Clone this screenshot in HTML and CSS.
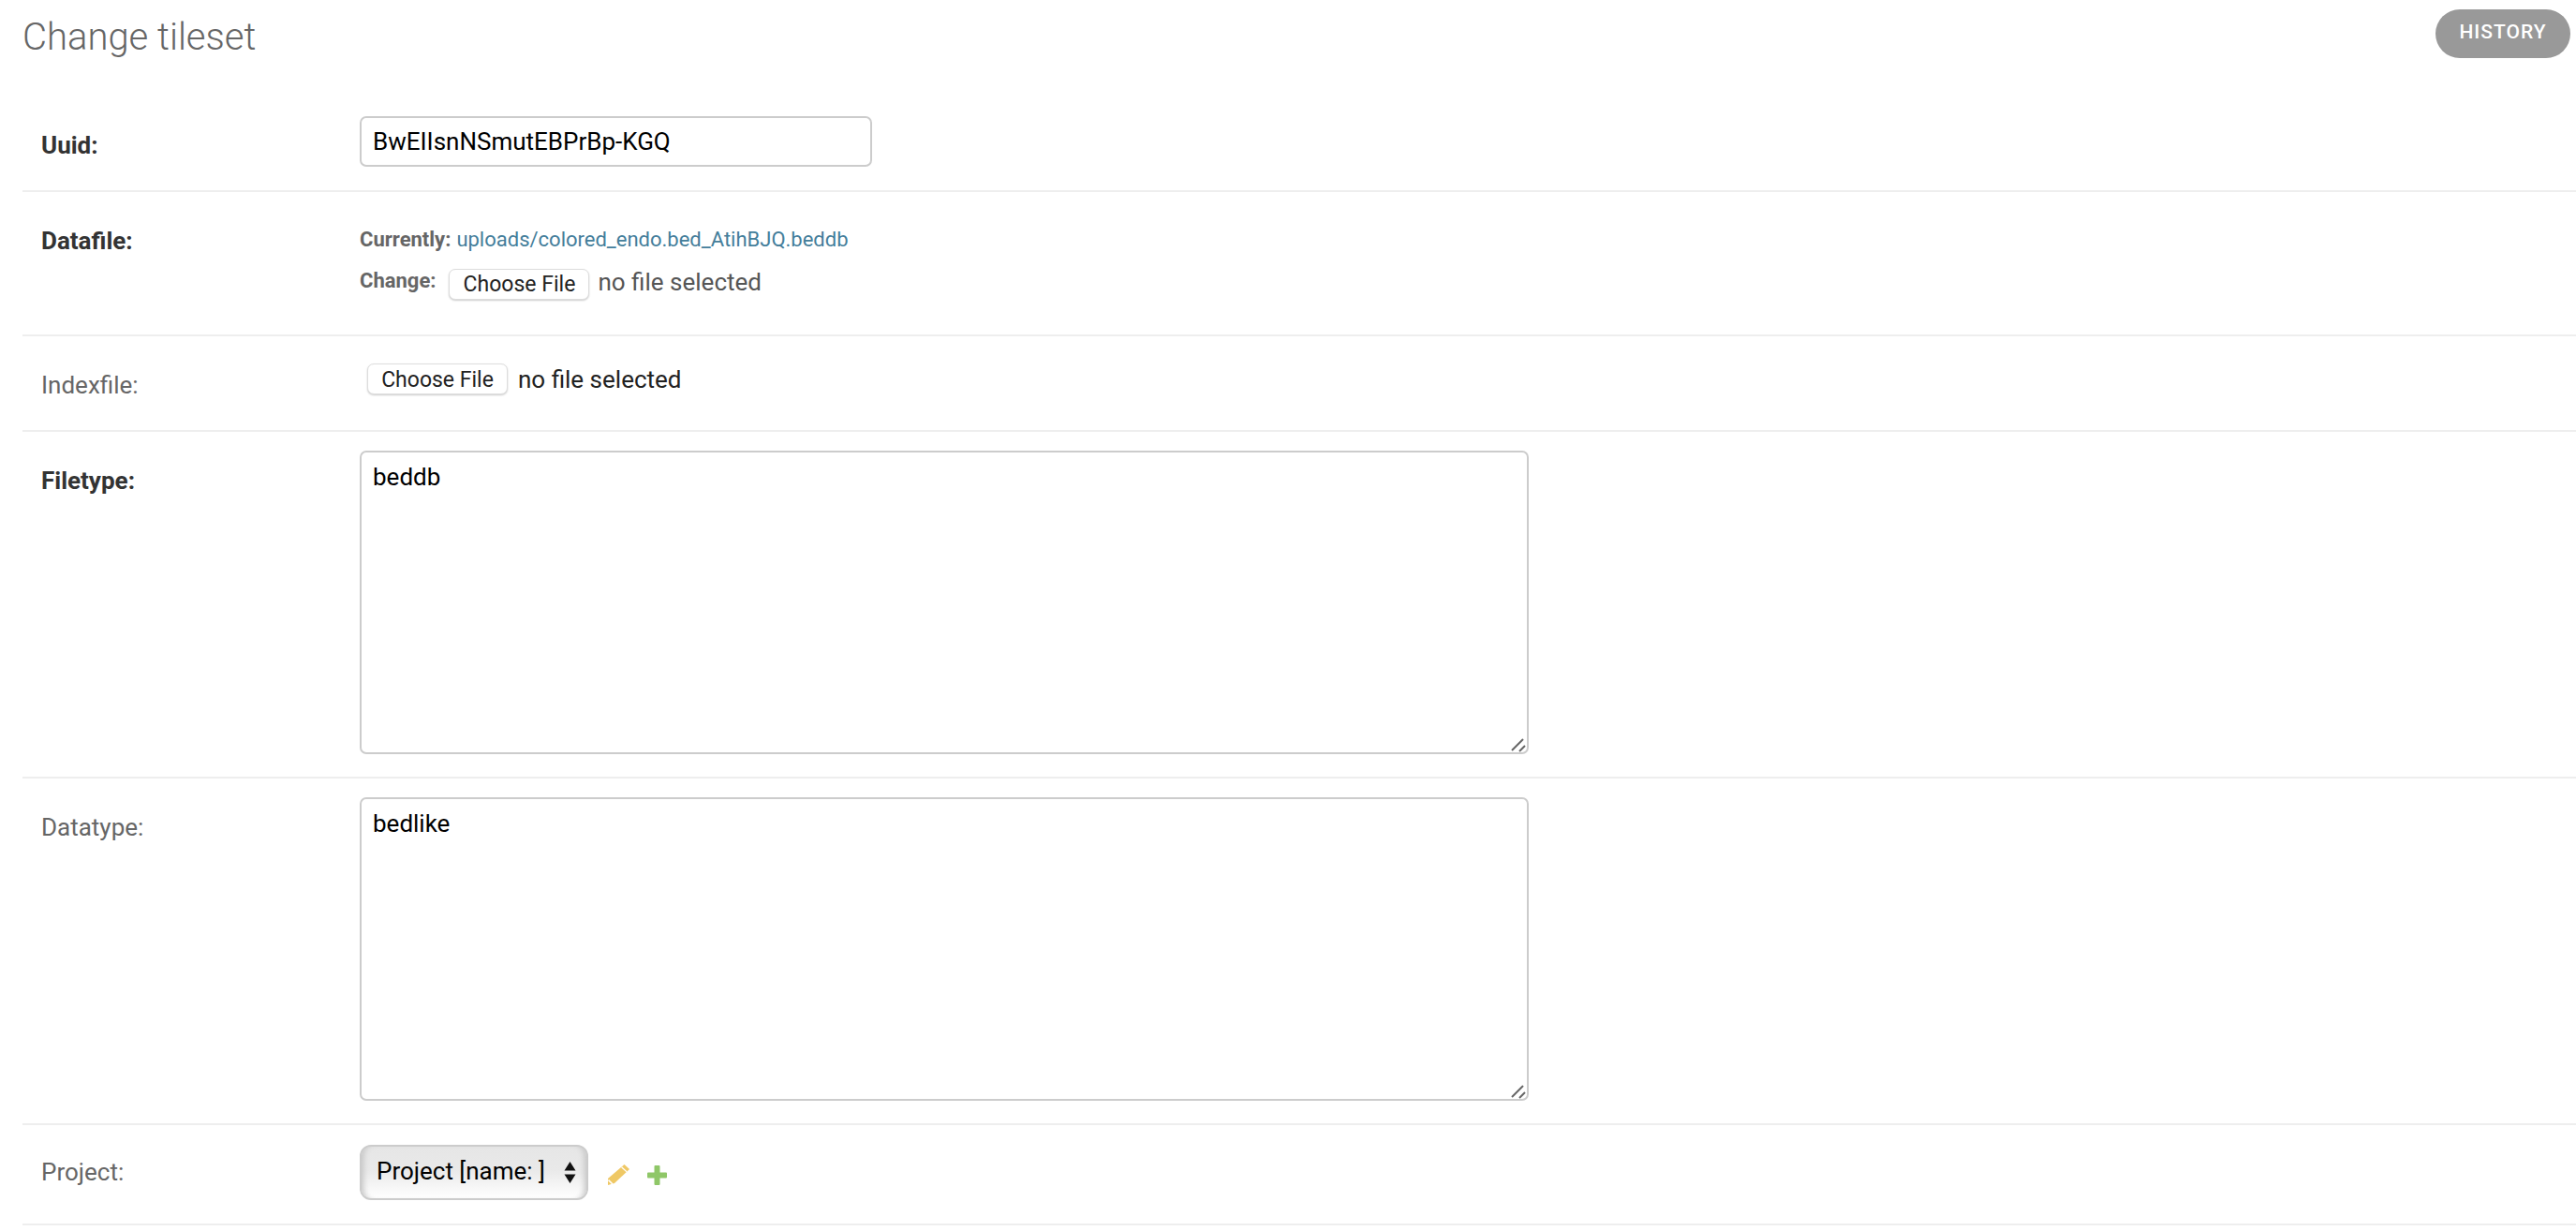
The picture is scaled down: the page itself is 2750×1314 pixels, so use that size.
FILE: index.html
```html
<!DOCTYPE html>
<html lang="en">
<head>
<meta charset="utf-8">
<title>Change tileset</title>
<link rel="stylesheet" href="styles.css">
</head>
<body>
<header class="page-head">
  <h1 class="title">Change tileset</h1>
  <a class="history" href="#">HISTORY</a>
</header>
<form class="form">
  <div class="row row-uuid">
    <label class="label required">Uuid:</label>
    <input class="text-input" type="text" value="BwEIIsnNSmutEBPrBp-KGQ">
  </div>
  <div class="row row-datafile">
    <label class="label required">Datafile:</label>
    <div class="file-stack">
      <p class="file-line"><b class="small-label">Currently:</b><a class="file-link" href="#">uploads/colored_endo.bed_AtihBJQ.beddb</a></p>
      <p class="file-line change-line"><b class="small-label">Change:</b><button type="button" class="file-btn">Choose File</button><span class="file-name muted">no file selected</span></p>
    </div>
  </div>
  <div class="row row-indexfile">
    <label class="label">Indexfile:</label>
    <div class="file-plain"><button type="button" class="file-btn">Choose File</button><span class="file-name">no file selected</span></div>
  </div>
  <div class="row row-area row-filetype">
    <label class="label required">Filetype:</label>
    <div class="area-wrap">
      <textarea class="area">beddb</textarea>
      <svg class="grip" width="16" height="16" viewBox="0 0 16 16"><path d="M1 14 L13 2 M9 15 L15 9" stroke="#666" stroke-width="2"/></svg>
    </div>
  </div>
  <div class="row row-area">
    <label class="label">Datatype:</label>
    <div class="area-wrap">
      <textarea class="area">bedlike</textarea>
      <svg class="grip" width="16" height="16" viewBox="0 0 16 16"><path d="M1 14 L13 2 M9 15 L15 9" stroke="#666" stroke-width="2"/></svg>
    </div>
  </div>
  <div class="row row-project">
    <label class="label">Project:</label>
    <div class="select-wrap">
      <select class="select"><option>Project [name: ]</option></select>
      <svg class="select-arrows" width="13" height="23" viewBox="0 0 13 23"><path d="M6.5 0 L12.5 9.5 H.5 Z M.5 13.5 H12.5 L6.5 23 Z" fill="#111"/></svg>
    </div>
    <svg class="icon icon-edit" width="23" height="22" viewBox="0 0 23 22"><path d="M17.5 0 L23 5 L7 20 L0 22 L0 15 Z" fill="#efc865"/><path d="M.5 16.5 L5 21" stroke="#fff" stroke-width="1.6"/><path d="M14.5 2.8 L20 7.8" stroke="#fff" stroke-width="1.2"/></svg>
    <svg class="icon icon-add" width="21" height="21" viewBox="0 0 21 21"><path d="M7.5 1 Q7.5 0 8.5 0 H12.5 Q13.5 0 13.5 1 V7.5 H20 Q21 7.5 21 8.5 V12.5 Q21 13.5 20 13.5 H13.5 V20 Q13.5 21 12.5 21 H8.5 Q7.5 21 7.5 20 V13.5 H1 Q0 13.5 0 12.5 V8.5 Q0 7.5 1 7.5 H7.5 Z" fill="#8fc768"/></svg>
  </div>
</form>
</body>
</html>
```
FILE: styles.css
```css
* { box-sizing: border-box; }
html, body { margin: 0; height: 100%; overflow: hidden; }
body {
  background: #fff;
  color: #333;
  font-family: Roboto, "Liberation Sans", sans-serif;
  padding: 0 0 0 24px;
}
.page-head {
  display: flex;
  justify-content: space-between;
  align-items: flex-start;
  height: 100px;
  padding-top: 10px;
  padding-right: 6px;
}
.title {
  margin: -10px 0 0;
  padding-top: 10px;
  font-size: 40px;
  font-weight: 300;
  line-height: 60px;
  color: #666;
}
.history {
  display: block;
  width: 144px;
  height: 52px;
  line-height: 48px;
  text-align: center;
  border-radius: 26px;
  background: #999;
  color: #fff;
  font-size: 21px;
  font-weight: 500;
  letter-spacing: 1px;
  text-decoration: none;
}
.row {
  display: flex;
  align-items: flex-start;
  border-bottom: 2px solid #eee;
  padding-left: 20px;
}
.label {
  width: 340px;
  flex: none;
  font-size: 26px;
  line-height: 30px;
  color: #666;
}
.label.required { font-weight: 700; color: #333; }
.row-uuid { height: 105px; padding-top: 24px; }
.row-uuid .label { padding-top: 16px; }
.text-input {
  width: 547px;
  height: 54px;
  padding: 0 12px;
  border: 2px solid #ccc;
  border-radius: 7px;
  font: 400 26px Roboto, sans-serif;
  color: #000;
  background: #fff;
  outline: none;
}
.row-datafile { height: 154px; padding-top: 32px; }
.row-datafile .label { padding-top: 5px; }
.file-stack { display: flex; flex-direction: column; padding-top: 3px; }
.file-line { margin: 0; display: flex; align-items: center; height: 30px; font-size: 22px; white-space: nowrap; }
.change-line { margin-top: 12px; height: 34px; }
.small-label { font-weight: 700; color: #666; font-size: 22px; margin-right: 6px; }
.file-link { color: #447e9b; text-decoration: none; }
.file-btn {
  flex: none;
  width: 150px;
  height: 33px;
  padding: 1px 0 0;
  margin: 0 9px 0 0;
  border: 1px solid #ddd;
  border-radius: 7px;
  background: #fff;
  box-shadow: 0 1px 2px rgba(0,0,0,.2);
  font: 400 23px Roboto, sans-serif;
  color: #222;
}
.change-line .file-btn { margin: 8px 9px 0 8px; }
.file-name { font-size: 26px; color: #222; }
.file-name.muted { color: #555; margin-top: 4px; }
.row-indexfile { height: 102px; padding-top: 26px; }
.row-indexfile .label { padding-top: 11px; }
.file-plain { display: flex; align-items: center; padding: 3px 0 0 8px; height: 36px; }
.file-plain .file-btn { margin-right: 11px; }
.row-area { height: 370px; padding-top: 20px; }
.row-area .label { padding-top: 17px; }
.area-wrap { position: relative; width: 1248px; height: 324px; }
.area {
  display: block;
  width: 100%;
  height: 100%;
  padding: 10px 12px;
  border: 2px solid #ccc;
  border-radius: 7px;
  font: 400 26px/32px Roboto, sans-serif;
  color: #000;
  outline: none;
  resize: none;
}
.grip { position: absolute; right: 3px; bottom: 2px; pointer-events: none; }
.row-project { height: 107px; padding-top: 21px; }
.row-project .label { padding-top: 14px; }
.select-wrap { position: relative; width: 244px; height: 59px; }
.select {
  appearance: none;
  -webkit-appearance: none;
  display: block;
  width: 100%;
  height: 100%;
  padding: 0 0 3px 16px;
  border: 2px solid #ccc;
  border-radius: 12px;
  background: linear-gradient(#e6e6e6, #e9e9e9 45%, #fff);
  box-shadow: inset 7px 0 6px -5px #c4c4c4, inset -7px 0 6px -5px #c4c4c4;
  font: 400 26px Roboto, sans-serif;
  color: #000;
}
.select-arrows { position: absolute; right: 13px; top: 18px; pointer-events: none; }
.icon { flex: none; }
.icon-edit { margin: 21px 0 0 21px; }
.icon-add { margin: 22px 0 0 19px; }
```
